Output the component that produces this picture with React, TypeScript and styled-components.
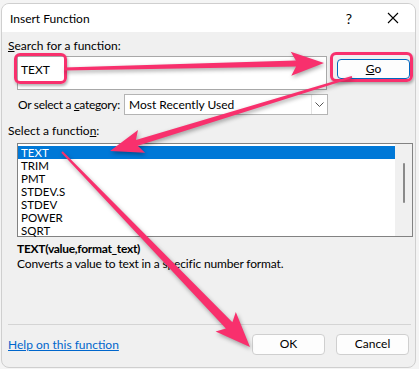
import styled, { createGlobalStyle } from "styled-components";

const GlobalStyle = createGlobalStyle`
  html, body {
    margin: 0;
    padding: 0;
    background: #f4f4f4;
  }
  * {
    box-sizing: border-box;
  }
`;

const Screen = styled.div`
  position: relative;
  width: 419px;
  height: 369px;
  padding: 3px 3px 1px 1px;
  overflow: hidden;
  font-family: "Segoe UI", Lato, "Noto Sans", sans-serif;
  font-size: 12px;
  color: #000;
`;

const Dialog = styled.div`
  display: flex;
  flex-direction: column;
  height: 100%;
  background: #f0f0f0;
  border: 1px solid #cfcfcf;
  border-radius: 8px;
  overflow: hidden;
`;

const TitleBar = styled.div`
  display: flex;
  align-items: center;
  height: 28px;
  background: #fff;
  padding-left: 8px;
`;

const Title = styled.div`
  flex: 1;
`;

const TitleIcon = styled.div`
  width: 44px;
  display: flex;
  justify-content: center;
  align-items: center;
  font-size: 14px;
`;

const Body = styled.div`
  flex: 1;
  display: flex;
  flex-direction: column;
  padding: 0 5px 0 6px;
`;

const Label = styled.div<{ $top: number }>`
  margin-top: ${(p) => p.$top}px;
  line-height: 16px;
  white-space: nowrap;
`;

const SearchRow = styled.div`
  display: flex;
  align-items: flex-start;
  margin-top: 2px;
  padding-left: 9px;
`;

const SearchBox = styled.div`
  position: relative;
  width: 311px;
  height: 34px;
  background: #fff;
  border: 1px solid #a8a8a8;
  padding: 5px 3px;
  line-height: 16px;
`;

const Button = styled.div<{ $default?: boolean }>`
  width: 73px;
  height: ${(p) => (p.$default ? 20 : 21)}px;
  display: flex;
  align-items: center;
  justify-content: center;
  background: #fdfdfd;
  border: 1px solid ${(p) => (p.$default ? "#0067c0" : "#cfcfcf")};
  border-radius: 4px;
  line-height: 16px;
`;

const GoWrap = styled.div`
  position: relative;
  margin: 3px 0 0 10px;
`;

const Highlight = styled.div<{ $l: number; $t: number; $w: number; $h: number }>`
  position: absolute;
  left: ${(p) => p.$l}px;
  top: ${(p) => p.$t}px;
  width: ${(p) => p.$w}px;
  height: ${(p) => p.$h}px;
  border: 3px solid #f8306d;
  border-radius: 6px;
  box-shadow: 1px 2px 3px rgba(0, 0, 0, 0.3);
  pointer-events: none;
`;

const CategoryRow = styled.div`
  display: flex;
  align-items: center;
  margin-top: 4px;
  padding-left: 10px;
  gap: 4px;
`;

const CategoryLabel = styled.span`
  white-space: nowrap;
  letter-spacing: -0.3px;
`;

const Select = styled.div`
  display: flex;
  width: 204px;
  height: 21px;
  background: #fff;
  border: 1px solid #b4b4b4;
`;

const SelectText = styled.div`
  flex: 1;
  padding-left: 4px;
  line-height: 19px;
`;

const SelectArrow = styled.div`
  width: 16px;
  border-left: 1px solid #e2e2e2;
  display: flex;
  align-items: center;
  justify-content: center;
  color: #555;
`;

const ListBox = styled.div`
  display: flex;
  margin: 4px 0 0 9px;
  width: 396px;
  height: 94px;
  background: #fff;
  border: 1px solid #828282;
`;

const Items = styled.div`
  flex: 1;
  padding-top: 2px;
`;

const Item = styled.div<{ $selected?: boolean }>`
  height: 13px;
  line-height: 13px;
  font-size: 11.5px;
  padding-left: 3px;
  background: ${(p) => (p.$selected ? "#0078d7" : "transparent")};
  color: ${(p) => (p.$selected ? "#fff" : "#000")};
`;

const ScrollTrack = styled.div`
  width: 17px;
  background: #f0f0f0;
  display: flex;
  justify-content: center;
  padding-top: 19px;
`;

const ScrollThumb = styled.div`
  width: 2px;
  height: 40px;
  background: #8a8a8a;
  border-radius: 1px;
`;

const Syntax = styled.div`
  margin: 4px 0 0 9px;
  font-weight: bold;
  letter-spacing: -0.3px;
  line-height: 15px;
`;

const Description = styled.div`
  margin: 0 0 0 9px;
  letter-spacing: -0.15px;
  line-height: 15px;
`;

const Separator = styled.div`
  margin: auto 0 0 0;
  height: 1px;
  background: #d4d4d4;
  width: 403px;
`;

const Footer = styled.div`
  display: flex;
  align-items: center;
  height: 42px;
  padding-bottom: 8px;
`;

const HelpLink = styled.a`
  flex: 1;
  color: #0066cc;
  text-decoration: underline;
  margin-top: 4px;
`;

const ButtonGroup = styled.div`
  display: flex;
  gap: 11px;
  margin-top: 4px;
  margin-right: 1px;
`;

const Overlay = styled.svg`
  position: absolute;
  left: 0;
  top: 0;
  pointer-events: none;
  filter: drop-shadow(1px 2px 2px rgba(0, 0, 0, 0.35));
`;

type Arrow = {
  x1: number;
  y1: number;
  x2: number;
  y2: number;
  w1: number;
  w2: number;
  hl: number;
  hw: number;
};

const arrows: Arrow[] = [
  { x1: 64, y1: 69, x2: 324, y2: 63, w1: 3, w2: 6, hl: 28, hw: 12 },
  { x1: 352, y1: 77, x2: 110, y2: 151, w1: 2, w2: 6, hl: 28, hw: 12 },
  { x1: 62, y1: 152, x2: 250, y2: 347, w1: 2, w2: 9, hl: 30, hw: 14 },
];

function arrowPoints(a: Arrow) {
  const dx = a.x2 - a.x1;
  const dy = a.y2 - a.y1;
  const len = Math.hypot(dx, dy);
  const ux = dx / len;
  const uy = dy / len;
  const nx = -uy;
  const ny = ux;
  const bx = a.x2 - ux * a.hl;
  const by = a.y2 - uy * a.hl;
  const sweep = 5;
  const pts = [
    [a.x1 + (nx * a.w1) / 2, a.y1 + (ny * a.w1) / 2],
    [bx + (nx * a.w2) / 2, by + (ny * a.w2) / 2],
    [bx + nx * a.hw - ux * sweep, by + ny * a.hw - uy * sweep],
    [a.x2, a.y2],
    [bx - nx * a.hw - ux * sweep, by - ny * a.hw - uy * sweep],
    [bx - (nx * a.w2) / 2, by - (ny * a.w2) / 2],
    [a.x1 - (nx * a.w1) / 2, a.y1 - (ny * a.w1) / 2],
  ];
  return pts.map((p) => p.map((v) => v.toFixed(1)).join(",")).join(" ");
}

const functions = ["TEXT", "TRIM", "PMT", "STDEV.S", "STDEV", "POWER", "SQRT"];

export default function App() {
  return (
    <Screen>
      <GlobalStyle />
      <Dialog>
        <TitleBar>
          <Title>Insert Function</Title>
          <TitleIcon>?</TitleIcon>
          <TitleIcon>
            <svg width="12" height="12" viewBox="0 0 12 12">
              <path d="M1 1L11 11M11 1L1 11" stroke="#000" strokeWidth="1.1" />
            </svg>
          </TitleIcon>
        </TitleBar>
        <Body>
          <Label $top={6}>
            <u>S</u>earch for a function:
          </Label>
          <SearchRow>
            <SearchBox>
              TEXT
              <Highlight $l={-4} $t={-4} $w={53} $h={31} />
            </SearchBox>
            <GoWrap>
              <Button $default>
                <u>G</u>o
              </Button>
              <Highlight $l={-7} $t={-7} $w={83} $h={30} />
            </GoWrap>
          </SearchRow>
          <CategoryRow>
            <CategoryLabel>
              Or select a <u>c</u>ategory:
            </CategoryLabel>
            <Select>
              <SelectText>Most Recently Used</SelectText>
              <SelectArrow>
                <svg width="9" height="5" viewBox="0 0 9 5">
                  <path d="M0.5 0.5L4.5 4.5L8.5 0.5" stroke="#555" fill="none" />
                </svg>
              </SelectArrow>
            </Select>
          </CategoryRow>
          <Label $top={8}>
            Select a functio<u>n</u>:
          </Label>
          <ListBox>
            <Items>
              {functions.map((f, i) => (
                <Item key={f} $selected={i === 0}>
                  {f}
                </Item>
              ))}
            </Items>
            <ScrollTrack>
              <ScrollThumb />
            </ScrollTrack>
          </ListBox>
          <Syntax>TEXT(value,format_text)</Syntax>
          <Description>Converts a value to text in a specific number format.</Description>
          <Separator />
          <Footer>
            <HelpLink href="#">Help on this function</HelpLink>
            <ButtonGroup>
              <Button>OK</Button>
              <Button>Cancel</Button>
            </ButtonGroup>
          </Footer>
        </Body>
      </Dialog>
      <Overlay width="419" height="369" viewBox="0 0 419 369">
        {arrows.map((a, i) => (
          <polygon key={i} points={arrowPoints(a)} fill="#f8306d" />
        ))}
      </Overlay>
    </Screen>
  );
}
